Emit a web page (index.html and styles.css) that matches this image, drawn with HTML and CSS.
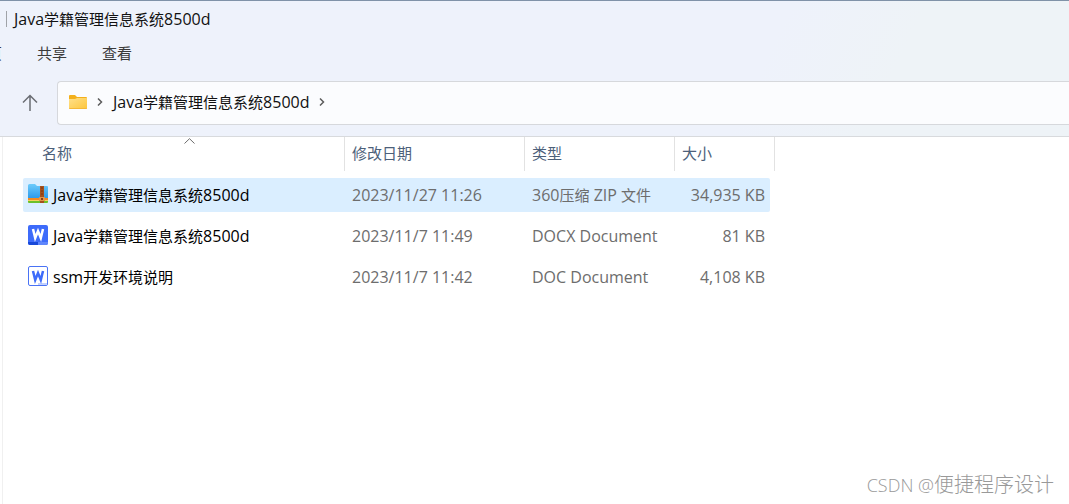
FILE: index.html
```html
<!DOCTYPE html>
<html lang="zh-CN">
<head>
  <meta charset="UTF-8">
  <meta name="viewport" content="width=device-width, initial-scale=1.0">
  <title>Java学籍管理信息系统8500d</title>
  <link rel="stylesheet" href="styles.css">
</head>
<body>
  <header class="window-header">
    <div class="title-bar">
      <span class="divider"></span>
      <h1><span class="latin">Java</span>学籍管理信息系统<span class="latin">8500d</span></h1>
    </div>
    <nav class="menu">
      <button type="button">主页</button>
      <button type="button">共享</button>
      <button type="button">查看</button>
    </nav>
    <div class="toolbar">
      <button type="button" class="up-btn" aria-label="上移">
        <svg width="16" height="18" viewBox="0 0 16 18" fill="none" stroke="#6a6d73" stroke-width="1.5">
          <path d="M8 17V1.5M1 8.5L8 1.5L15 8.5"/>
        </svg>
      </button>
      <div class="address">
        <svg class="folder" width="18" height="14" viewBox="0 0 18 14">
          <defs>
            <linearGradient id="folder-front" x1="0" y1="0" x2="1" y2="1">
              <stop offset="0" stop-color="#ffe08a"/>
              <stop offset="1" stop-color="#fdc63c"/>
            </linearGradient>
          </defs>
          <path fill="#f3b01c" d="M0 1a1 1 0 0 1 1-1h5l2 2h9a1 1 0 0 1 1 1v6H0z"/>
          <path fill="url(#folder-front)" d="M0 4h6l2-1h10v10a1 1 0 0 1-1 1H1a1 1 0 0 1-1-1z"/>
          <path fill="#f5b838" d="M0 13h18a1 1 0 0 1-1 1H1a1 1 0 0 1-1-1z"/>
        </svg>
        <svg class="chevron" width="6" height="8" viewBox="0 0 6 8" fill="none" stroke="#5c5c5c" stroke-width="1.5"><path d="M1 .5L4.500 4L1 7.500"/></svg>
        <a href="#"><span class="latin">Java</span>学籍管理信息系统<span class="latin">8500d</span></a>
        <svg class="chevron" width="6" height="8" viewBox="0 0 6 8" fill="none" stroke="#5c5c5c" stroke-width="1.5"><path d="M1 .5L4.500 4L1 7.500"/></svg>
      </div>
    </div>
  </header>

  <main class="content">
    <table class="files">
      <colgroup>
        <col class="col-name">
        <col class="col-date">
        <col class="col-type">
        <col class="col-size">
        <col class="col-end">
      </colgroup>
      <thead>
        <tr>
          <th class="name-head">
            名称
            <svg class="sort" width="11" height="6" viewBox="0 0 11 6" fill="none" stroke="#6b6b6b"><path d="M.5 5.500L5.500 .700L10.500 5.500"/></svg>
          </th>
          <th>修改日期</th>
          <th>类型</th>
          <th colspan="2">大小</th>
        </tr>
      </thead>
      <tbody>
        <tr class="selected">
          <td class="name">
            <div class="file">
              <svg width="20" height="20" viewBox="0 0 20 20">
                <defs>
                  <linearGradient id="zip-blue" x1="0" y1="0" x2="0" y2="1">
                    <stop offset="0" stop-color="#6ccbfb"/>
                    <stop offset="1" stop-color="#2e9bea"/>
                  </linearGradient>
                </defs>
                <path fill="#6cc02a" d="M0 14h20v4a1 1 0 0 1-1 1H1a1 1 0 0 1-1-1z"/>
                <path fill="#f8d25a" d="M0 14h20v3H0z"/>
                <path fill="#f58a1f" d="M0 13h20v3H0z"/>
                <path fill="url(#zip-blue)" d="M0 1.500A1.500 1.500 0 0 1 1.500 0H7l2 2h10a1 1 0 0 1 1 1v11H0z"/>
                <path fill="#a5501c" d="M12 2h4v17h-4z"/>
                <path stroke="#7b3510" d="M13 4h2M13 7h2M13 10h2"/>
                <path fill="#e0954e" d="M11 13h6v4h-6z"/>
                <path fill="#8a3d12" d="M13 14h2v2h-2z"/>
              </svg>
              <span><span class="latin">Java</span>学籍管理信息系统<span class="latin">8500d</span></span>
            </div>
          </td>
          <td><span class="latin">2023/11/27 11:26</span></td>
          <td><span class="latin">360</span>压缩<span class="latin"> ZIP </span>文件</td>
          <td class="size"><span class="latin">34,935 KB</span></td>
          <td class="end"></td>
        </tr>
        <tr>
          <td class="name">
            <div class="file">
              <svg width="20" height="20" viewBox="0 0 20 20">
                <rect width="20" height="20" rx="2" fill="#3d6bfa"/>
                <path fill="#1849d8" d="M0 17h10v3H2a2 2 0 0 1-2-2z"/>
                <path fill="#5f86fb" d="M10 17h10v1a2 2 0 0 1-2 2h-8z"/>
                <path fill="none" stroke="#fff" stroke-width="2.500" d="M5 4L7.200 13L10 6L12.800 13L15 4"/>
              </svg>
              <span><span class="latin">Java</span>学籍管理信息系统<span class="latin">8500d</span></span>
            </div>
          </td>
          <td><span class="latin">2023/11/7 11:49</span></td>
          <td><span class="latin">DOCX Document</span></td>
          <td class="size"><span class="latin">81 KB</span></td>
          <td class="end"></td>
        </tr>
        <tr>
          <td class="name">
            <div class="file">
              <svg width="20" height="20" viewBox="0 0 20 20">
                <rect x=".5" y=".5" width="19" height="19" rx="1.500" fill="#fff" stroke="#4a73f5"/>
                <path fill="#c3d1fd" d="M10 17h9v2h-9z"/>
                <path fill="none" stroke="#3d6bfa" stroke-width="2.500" d="M5 5L7.200 14L10 7L12.800 14L15 5"/>
              </svg>
              <span><span class="latin">ssm</span>开发环境说明</span>
            </div>
          </td>
          <td><span class="latin">2023/11/7 11:42</span></td>
          <td><span class="latin">DOC Document</span></td>
          <td class="size"><span class="latin">4,108 KB</span></td>
          <td class="end"></td>
        </tr>
      </tbody>
    </table>
  </main>
  <div class="watermark"><span class="site">CSDN @</span>便捷程序设计</div>
</body>
</html>
```
FILE: styles.css
```css
* {
  box-sizing: border-box;
}
body {
  margin: 0;
  min-height: 100vh;
  display: flex;
  flex-direction: column;
  position: relative;
  overflow: hidden;
  background-color: #fff;
  color: #111;
  font-family: "Open Sans", "Noto Sans CJK SC", sans-serif;
  font-size: 15px;
  line-height: 20px;
}
button {
  padding: 0;
  border: none;
  background: none;
  color: inherit;
  font: inherit;
}
a {
  color: inherit;
  text-decoration: none;
}
.latin {
  font-size: 16px;
}
.window-header {
  background: linear-gradient(115deg, #eef2fb 70%, #eef3f7 82%);
  border-top: 1px solid #8092a8;
  border-bottom: 1px solid #d8dadd;
}
.title-bar {
  display: flex;
  align-items: center;
  gap: 7px;
  height: 35px;
  padding-left: 6px;
}
.title-bar h1 {
  margin: 0;
  font-size: 15px;
  font-weight: normal;
}
.divider {
  width: 1px;
  height: 16px;
  background-color: #a0a3a8;
}
.menu {
  display: flex;
  align-items: center;
  gap: 35px;
  height: 34px;
  margin-left: -28px;
  color: #3a3a3a;
}
.toolbar {
  display: flex;
  align-items: center;
  padding: 11px 0;
}
.up-btn {
  display: flex;
  justify-content: center;
  width: 57px;
  padding-left: 3px;
}
.address {
  flex: 1;
  display: flex;
  align-items: center;
  height: 44px;
  padding: 0 0 2px 11px;
  background-color: #fbfcfe;
  border: 1px solid #d6d8dc;
  border-right: none;
  border-radius: 4px 0 0 4px;
}
.address .chevron {
  margin: 0 10px;
}
.content {
  flex: 1;
  margin-left: 2px;
  padding-left: 20px;
  border-left: 1px solid #f0f0f0;
}
.files {
  table-layout: fixed;
  width: 752px;
  margin-top: -7px;
  border-spacing: 0 7px;
}
.col-name {
  width: 322px;
}
.col-date {
  width: 180px;
}
.col-type {
  width: 150px;
}
.col-size {
  width: 95px;
}
.col-end {
  width: 5px;
}
.files th {
  height: 34px;
  padding: 0 7px 2px;
  border-right: 1px solid #e2e2e2;
  color: #4c607a;
  font-weight: normal;
  text-align: left;
}
.files .name-head {
  position: relative;
  padding-left: 19px;
}
.sort {
  position: absolute;
  top: 1px;
  left: 161px;
}
.files td {
  height: 34px;
  padding: 0 5px 0 7px;
  color: #6d6d6d;
  white-space: nowrap;
}
.files .name {
  padding-left: 5px;
  color: #000;
}
.files .size {
  text-align: right;
}
.files .end {
  padding: 0;
}
.selected td:not(.end) {
  background-color: #daeeff;
}
.selected .name {
  border-radius: 2px 0 0 2px;
}
.selected .size {
  border-radius: 0 2px 2px 0;
}
.file {
  display: flex;
  align-items: center;
  gap: 5px;
}
.file svg {
  margin-bottom: 2px;
}
.watermark {
  position: absolute;
  right: 15px;
  bottom: 6px;
  color: #999;
  font-family: "Liberation Sans", "Noto Sans CJK SC", sans-serif;
  font-size: 20px;
  font-weight: 300;
  line-height: 26px;
}
.watermark .site {
  font-family: "Open Sans", sans-serif;
  font-size: 18px;
}
```
